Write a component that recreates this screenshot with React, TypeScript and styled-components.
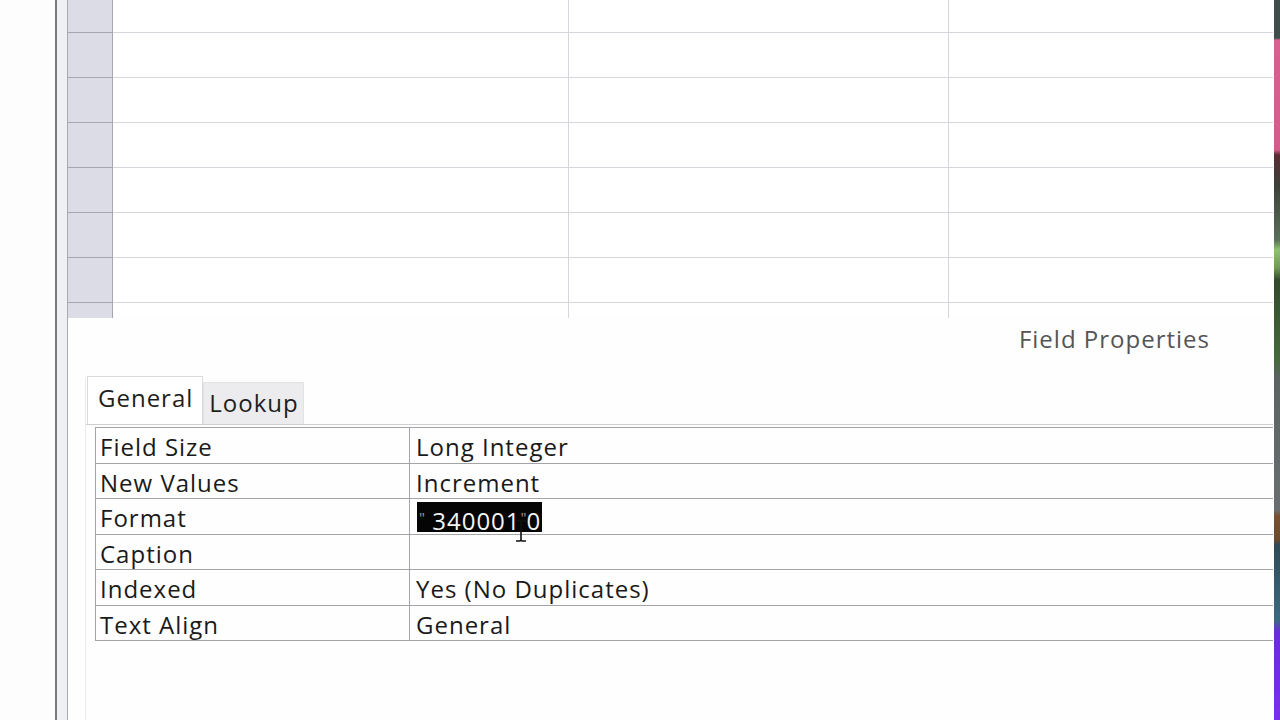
import React from "react";
import styled, { createGlobalStyle } from "styled-components";

const GlobalStyle = createGlobalStyle`
  html, body {
    margin: 0;
    padding: 0;
    background: #ffffff;
    overflow: hidden;
  }
  * {
    box-sizing: border-box;
  }
`;

const Screen = styled.div`
  display: flex;
  width: 1280px;
  height: 720px;
  background: #fefefe;
  font-family: "Open Sans", "Noto Sans", "Liberation Sans", sans-serif;
`;

const Gutter = styled.div`
  width: 55px;
  background: #fdfdfd;
`;

const Window = styled.div`
  flex: 1;
  display: flex;
  border-left: 2px solid #7a7a7e;
`;

const SideStrip = styled.div`
  width: 11px;
  background: #eff0f4;
  border-right: 1px solid #a9a9b0;
`;

const Content = styled.div`
  flex: 1;
  display: flex;
  flex-direction: column;
  padding-right: 1px;
`;

const DesktopStrip = styled.div`
  width: 6px;
  background: linear-gradient(
    to bottom,
    #3f4d4b 0px,
    #3f4d4b 38px,
    #d2638f 40px,
    #cf5f8a 150px,
    #5a2c34 155px,
    #3d4038 185px,
    #59705a 240px,
    #8fc36a 250px,
    #6f9a50 268px,
    #324a2c 280px,
    #466a3c 360px,
    #5a6362 378px,
    #6a6e70 510px,
    #7a5030 516px,
    #6a4a2e 540px,
    #2f4a58 545px,
    #3b6a80 620px,
    #6a2cd8 632px,
    #7a2ff0 720px
  );
`;

const Grid = styled.div`
  height: 318px;
  display: flex;
  flex-direction: column;
  overflow: hidden;
`;

const GridRow = styled.div<{ $h: number }>`
  display: flex;
  height: ${(p) => p.$h}px;
  flex-shrink: 0;
`;

const Selector = styled.div<{ $last?: boolean }>`
  width: 45px;
  background: #dcdce6;
  border-right: 1px solid #a6a6b0;
  border-bottom: ${(p) => (p.$last ? "none" : "1px solid #a6a6b0")};
`;

const Cell = styled.div<{ $w?: number; $last?: boolean }>`
  ${(p) => (p.$w ? `width: ${p.$w}px;` : "flex: 1;")}
  border-right: ${(p) => (p.$w ? "1px solid #d6d6dc" : "none")};
  border-bottom: ${(p) => (p.$last ? "none" : "1px solid #d6d6dc")};
  background: #ffffff;
`;

const Panel = styled.div`
  flex: 1;
  display: flex;
  flex-direction: column;
  background: #fefefe;
`;

const PanelTitle = styled.div`
  align-self: flex-end;
  margin: 6px 63px 0 0;
  height: 30px;
  font-size: 24px;
  font-weight: 500;
  line-height: 30px;
  color: #555558;
  letter-spacing: 1px;
  white-space: nowrap;
`;

const Frame = styled.div`
  flex: 1;
  margin: 23px 0 0 17px;
  border-left: 1px solid #ececec;
  display: flex;
  flex-direction: column;
`;

const TabRow = styled.div`
  display: flex;
  align-items: flex-end;
  height: 48px;
  padding-left: 1px;
  border-bottom: 1px solid #cfcfd2;
`;

const Tab = styled.div<{ $active?: boolean }>`
  height: ${(p) => (p.$active ? 48 : 42)}px;
  padding: ${(p) => (p.$active ? "0 9px 0 10px" : "0 4px 0 5px")};
  background: ${(p) => (p.$active ? "#ffffff" : "#ececee")};
  border: 1px solid ${(p) => (p.$active ? "#dadada" : "#e2e2e4")};
  border-bottom: none;
  font-size: 24px;
  font-weight: 500;
  line-height: ${(p) => (p.$active ? 42 : 40)}px;
  color: #1e1e1e;
  letter-spacing: 1px;
  white-space: nowrap;
`;

const Table = styled.div`
  margin: 2px 0 0 9px;
  border-top: 1px solid #a4a4a8;
  border-left: 1px solid #a4a4a8;
  display: flex;
  flex-direction: column;
`;

const PropRow = styled.div`
  display: flex;
  height: 35.5px;
  border-bottom: 1px solid #a4a4a8;
`;

const Label = styled.div`
  width: 314px;
  border-right: 1px solid #a4a4a8;
  padding: 1px 0 0 4px;
  font-size: 24px;
  font-weight: 500;
  line-height: 35px;
  color: #1a1a1a;
  letter-spacing: 1px;
  white-space: nowrap;
  overflow: hidden;
`;

const Value = styled.div`
  flex: 1;
  position: relative;
  padding: 1px 0 0 6px;
  font-size: 24px;
  font-weight: 500;
  line-height: 35px;
  color: #1a1a1a;
  letter-spacing: 1px;
  white-space: nowrap;
`;

const Selected = styled.span`
  position: absolute;
  left: 7px;
  top: 3px;
  padding: 0 1px 0 2px;
  height: 30px;
  line-height: 30px;
  background: #050505;
  color: #f4f4f4;
`;

const Tick = styled.span`
  color: #9a9a9a;
  font-size: 15px;
  vertical-align: 7px;
  letter-spacing: 0;
`;

const IBeam = styled.svg`
  position: absolute;
  left: 103px;
  top: 21px;
  pointer-events: none;
`;

const gridRows = [33, 45, 45, 45, 45, 45, 45, 15];

const properties: { label: string; value?: string; selected?: boolean }[] = [
  { label: "Field Size", value: "Long Integer" },
  { label: "New Values", value: "Increment" },
  { label: "Format", selected: true },
  { label: "Caption", value: "" },
  { label: "Indexed", value: "Yes (No Duplicates)" },
  { label: "Text Align", value: "General" },
];

const App: React.FC = () => {
  return (
    <>
      <GlobalStyle />
      <Screen>
        <Gutter />
        <Window>
          <SideStrip />
          <Content>
            <Grid>
              {gridRows.map((h, i) => {
                const last = i === gridRows.length - 1;
                return (
                  <GridRow key={i} $h={h}>
                    <Selector $last={last} />
                    <Cell $w={456} $last={last} />
                    <Cell $w={380} $last={last} />
                    <Cell $last={last} />
                  </GridRow>
                );
              })}
            </Grid>

            <Panel>
              <PanelTitle>Field Properties</PanelTitle>
              <Frame>
                <TabRow>
                  <Tab $active>General</Tab>
                  <Tab>Lookup</Tab>
                </TabRow>
                <Table>
                  {properties.map((prop) => (
                    <PropRow key={prop.label}>
                      <Label>{prop.label}</Label>
                      <Value>
                        {prop.selected ? (
                          <>
                            <Selected>
                              <Tick>"</Tick> 340001<Tick>"</Tick>0
                            </Selected>
                            <IBeam width="16" height="22" viewBox="0 0 16 22">
                              <path
                                d="M3 1h4l1 1 1-1h4M8 2v18M3 21h4l1-1 1 1h4"
                                fill="none"
                                stroke="#111"
                                strokeWidth="1.6"
                              />
                            </IBeam>
                          </>
                        ) : (
                          prop.value
                        )}
                      </Value>
                    </PropRow>
                  ))}
                </Table>
              </Frame>
            </Panel>
          </Content>
          <DesktopStrip />
        </Window>
      </Screen>
    </>
  );
};

export default App;
